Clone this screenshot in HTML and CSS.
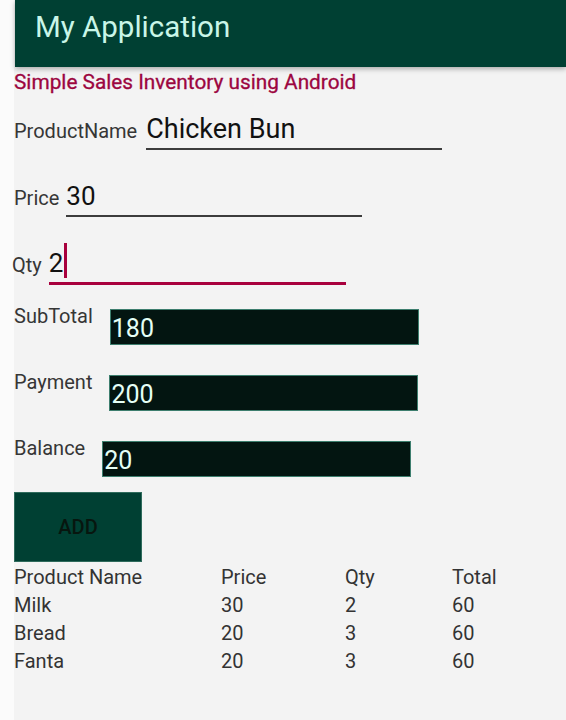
FILE: index.html
```html
<!DOCTYPE html>
<html lang="en">

<head>
    <meta charset="UTF-8">
    <meta name="viewport" content="width=device-width, initial-scale=1.0">
    <title>My Application</title>
    <link rel="stylesheet" href="styles.css">
</head>

<body>

    <div class="app">
        <div class="toolbar">My Application</div>

        <div class="content">
            <p class="subtitle">Simple Sales Inventory using Android</p>

            <div class="field-row name-row">
                <span class="label">ProductName</span>
                <div class="field name-field">Chicken Bun</div>
            </div>

            <div class="field-row">
                <span class="label">Price</span>
                <div class="field price-field">30</div>
            </div>

            <div class="field-row">
                <span class="label qty-label">Qty</span>
                <div class="field qty-field focused"><span class="caret">2</span></div>
            </div>

            <div class="out-row first-out">
                <span class="label">SubTotal</span>
                <div class="out-box subtotal-box">180</div>
            </div>

            <div class="out-row">
                <span class="label">Payment</span>
                <div class="out-box payment-box">200</div>
            </div>

            <div class="out-row">
                <span class="label">Balance</span>
                <div class="out-box balance-box">20</div>
            </div>

            <button class="add-btn">ADD</button>

            <div class="sales">
                <span>Product Name</span><span>Price</span><span>Qty</span><span>Total</span>
                <span>Milk</span><span>30</span><span>2</span><span>60</span>
                <span>Bread</span><span>20</span><span>3</span><span>60</span>
                <span>Fanta</span><span>20</span><span>3</span><span>60</span>
            </div>
        </div>
    </div>

</body>

</html>
```

FILE: styles.css
```css
body {
    margin: 0;
    font-family: Roboto, "Liberation Sans", sans-serif;
    background-color: #fbfbfb;
}

.app {
    margin-left: 14px;
    min-height: 100vh;
    background-color: #f3f3f3;
}

.toolbar {
    box-sizing: border-box;
    height: 67px;
    margin-left: 1px;
    padding: 10px 0 0 20px;
    font-size: 29.5px;
    line-height: 34px;
    color: #c9f6e8;
    background-color: #004033;
    box-shadow: 0 2px 5px rgba(0, 0, 0, 0.3);
    position: relative;
}

.content {
    color: #383838;
}

.subtitle {
    margin: 4px 0 0;
    font-size: 20.8px;
    line-height: 22px;
    color: #9c0640;
    -webkit-text-stroke: 0.3px #9c0640;
}

.label {
    font-size: 20px;
    line-height: 24px;
    color: #363636;
}

/* edit texts */
.field-row {
    display: flex;
    align-items: baseline;
    margin-top: 31px;
}

.name-row {
    margin-top: 21px;
}

.field {
    margin-left: 7px;
    padding-bottom: 4px;
    font-size: 26px;
    line-height: 30px;
    color: #111;
    border-bottom: 2px solid #3c3c3c;
}

.name-field {
    width: 296px;
    margin-left: 9px;
    font-size: 27px;
}

.price-field {
    width: 296px;
}

.qty-label {
    margin-left: -2px;
}

.qty-field {
    width: 297px;
}

.focused {
    border-bottom: 3px solid #a8003d;
}

.caret {
    position: relative;
}

.caret::after {
    content: '';
    position: absolute;
    top: -5px;
    bottom: 0;
    right: -4px;
    width: 3px;
    background-color: #a8003d;
}

/* read-only totals */
.out-row {
    display: flex;
    align-items: flex-start;
    margin-top: 25px;
}

.first-out {
    margin-top: 19px;
}

.out-box {
    box-sizing: border-box;
    width: 309px;
    height: 36px;
    margin-top: 5px;
    margin-left: 17px;
    padding: 4px 0 0 1px;
    font-size: 25px;
    line-height: 30px;
    color: #e4fff6;
    background-color: #031511;
    border: 1px solid #3d7e6e;
}

.add-btn {
    display: block;
    width: 128px;
    height: 70px;
    margin-top: 15px;
    padding: 0;
    font-family: Roboto, "Liberation Sans", sans-serif;
    font-size: 20px;
    font-weight: 500;
    color: #07160f;
    background-color: #004033;
    border: 1px solid #2f6b5c;
}

.sales {
    display: grid;
    grid-template-columns: 207px 124px 107px auto;
    margin-top: 1px;
    font-size: 20px;
    line-height: 28px;
    color: #333;
}
```
